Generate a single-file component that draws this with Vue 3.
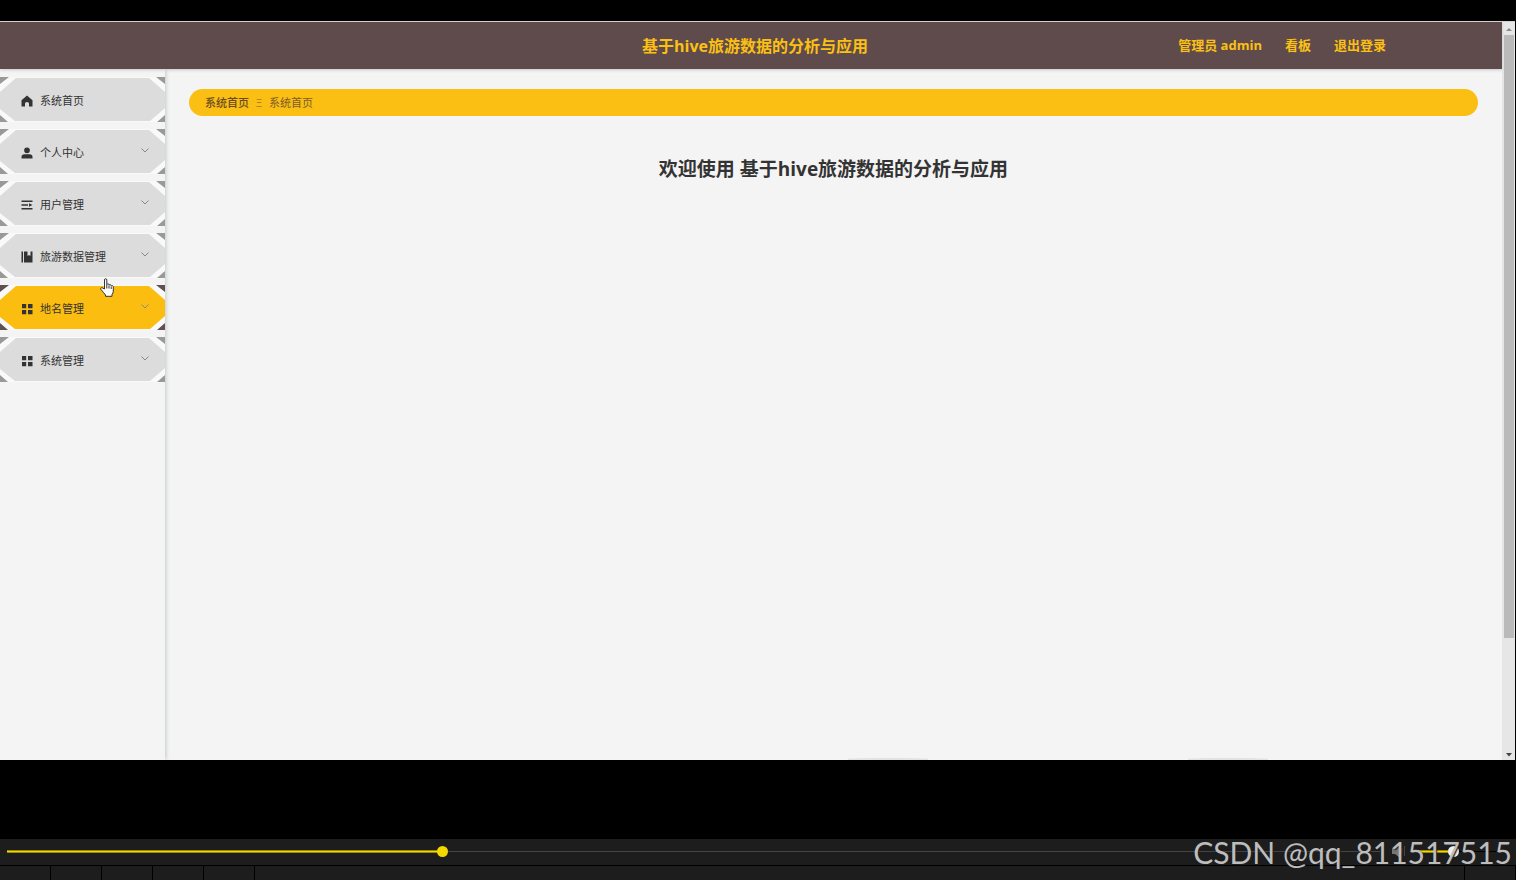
<script setup>
import { ref } from 'vue'

const siteName = '基于hive旅游数据的分析与应用'
const active = ref('place')
const progress = ref(316)
const volume = ref(48)

const menu = [
  { id: 'home', label: '系统首页', icon: 'home', sub: false },
  { id: 'me', label: '个人中心', icon: 'user', sub: true },
  { id: 'users', label: '用户管理', icon: 'lines', sub: true },
  { id: 'travel', label: '旅游数据管理', icon: 'book', sub: true },
  { id: 'place', label: '地名管理', icon: 'grid', sub: true },
  { id: 'system', label: '系统管理', icon: 'grid', sub: true }
]
</script>

<template>
  <div class="player">
    <section class="screen">
      <div class="page">
        <header class="topbar">
          <h1 class="brand">{{ siteName }}</h1>
          <nav class="links">
            <a href="#admin">管理员 admin</a>
            <a href="#board">看板</a>
            <a href="#logout">退出登录</a>
          </nav>
        </header>
        <div class="body">
          <nav class="sidebar">
            <button
              v-for="m in menu"
              :key="m.id"
              type="button"
              class="item"
              :class="{ active: active === m.id }"
            >
              <svg class="plate" viewBox="0 0 165 45" preserveAspectRatio="none" aria-hidden="true">
                <path class="band" d="M0 0H165V45H0Z" />
                <path class="fill" d="M16 1H149L165 15V31L150 44H15L0 32V15Z" />
                <path class="corner" d="M0 0H9L0 7ZM156 0H165V7ZM0 38L8 45H0ZM165 38V45H157Z" />
              </svg>
              <svg class="icon" viewBox="0 0 12 12" aria-hidden="true">
                <path v-if="m.icon === 'home'" d="M6 .5 11.5 5.2V11.5H8V8.500Q8 7 6 7T4 8.500V11.5H.5V5.2Z" />
                <path v-else-if="m.icon === 'user'" d="M6 .5A2.8 2.8 0 0 1 6 6.2 2.8 2.8 0 0 1 6 .5ZM.5 11.5V10Q.5 7.2 3.5 7.2H8.500Q11.500 7.200 11.500 10V11.500Z" />
                <path v-else-if="m.icon === 'lines'" d="M.5 1.500H11.500V3H.5ZM.5 5.200H7V6.700H.5ZM8 4.300 11.500 6 8 7.700ZM.5 9H11.500V10.500H.5Z" />
                <path v-else-if="m.icon === 'book'" d="M.5 .5H2V11.500H.5ZM3 .5H6.500V5L8 4 9.500 5V.5H11.500V11.500H3Z" />
                <path v-else d="M1 1H5.200V5.200H1ZM7 1H11.500V5.200H7ZM1 7H5.200V11.200H1ZM7 7H11.500V11.200H7Z" />
              </svg>
              <span class="label">{{ m.label }}</span>
              <svg v-if="m.sub" class="arrow" viewBox="0 0 8 5" aria-hidden="true">
                <path d="M.5 .5 4 4 7.500 .5" />
              </svg>
            </button>
          </nav>
          <main class="main">
            <div class="crumbs">
              <a href="#home" class="first">系统首页</a>
              <span class="sep">Ξ</span>
              <span>系统首页</span>
            </div>
            <h2 class="welcome">欢迎使用 {{ siteName }}</h2>
            <div class="peeks">
              <i class="peek"></i>
              <i class="peek"></i>
            </div>
          </main>
        </div>
      </div>
      <div class="scroll">
        <svg class="tip" viewBox="0 0 6 4" aria-hidden="true"><path class="dim" d="M0 4 3 1 6 4Z" /></svg>
        <div class="rail"><div class="thumb"></div></div>
        <svg class="tip" viewBox="0 0 6 4" aria-hidden="true"><path d="M0 0 3 3.500 6 0Z" /></svg>
      </div>
      <svg class="hand" viewBox="0 0 14 19" aria-hidden="true">
        <path d="M4.500 11V2Q4.500 .7 5.600 .7T6.800 2V6.500Q7.200 5.600 8.200 5.900T9 7.200Q9.500 6.300 10.400 6.700T11.200 8Q11.700 7.300 12.500 7.700T13.300 9V13Q13.300 15 12 16.500V18.300H5.500V17Q3.500 14.500 1 11.500 .3 10.300 1.200 9.800T3 10.300Z" />
        <path class="fingers" d="M6.800 6.500V10.500M9 7.500V10.500M11.200 8.500V11" />
      </svg>
    </section>

    <footer class="controls">
      <div class="timeline">
        <input v-model="progress" class="seek" type="range" min="0" max="1000" aria-label="Progress" :style="{ '--v': progress / 1000 }" />
        <svg class="speaker" viewBox="0 0 14 14" aria-hidden="true">
          <path d="M0 4H3L8 0V14L3 10H0Z" />
          <path class="wave" d="M10 4V10M12.500 2V12" />
        </svg>
        <input v-model="volume" class="volume" type="range" min="0" max="100" aria-label="Volume" :style="{ '--v': volume / 100 }" />
      </div>
      <div class="buttons">
        <i v-for="n in 5" :key="n" class="cell"></i>
        <i class="rest"></i>
        <i class="cell"></i>
      </div>
    </footer>
    <div class="mark">CSDN @qq_811517515</div>
  </div>
</template>

<style>
body {
  background: #000;
}
</style>

<style scoped>
* {
  box-sizing: border-box;
}
.player {
  position: relative;
  display: flex;
  flex-direction: column;
  min-height: 100vh;
  padding-top: 21px;
  overflow: hidden;
  background: #000;
  font-family: "Open Sans", "Noto Sans CJK SC", sans-serif;
}
.screen {
  position: relative;
  flex: 1;
  display: flex;
  margin: 0 1px 79px 0;
  border-top: 1px solid #d6cfcf;
  background: #f4f4f4;
  overflow: hidden;
}
.page {
  flex: 1;
  display: flex;
  flex-direction: column;
}
.topbar {
  position: relative;
  z-index: 1;
  display: grid;
  grid-template-columns: 1fr auto 1fr;
  align-items: center;
  height: 47px;
  padding-left: 8px;
  background: #5f4b4c;
  box-shadow: 0 1px 3px #c8c8c8;
  color: #fbc012;
}
.brand {
  grid-column: 2;
  margin: 0;
  font-size: 16px;
  line-height: 24px;
}
.links {
  display: flex;
  justify-content: flex-end;
  gap: 23px;
  padding: 0 116px 2px 0;
  font-size: 13px;
  font-weight: 700;
  line-height: 20px;
}
.links a {
  color: inherit;
  text-decoration: none;
  white-space: nowrap;
}
.body {
  flex: 1;
  display: flex;
}
.sidebar {
  width: 165px;
  display: flex;
  flex-direction: column;
  gap: 7px;
  padding-top: 8px;
  box-shadow: 1px 0 4px #c4c8c8;
}
.item {
  position: relative;
  display: flex;
  align-items: center;
  gap: 7px;
  width: 100%;
  height: 45px;
  padding: 2px 16px 0 21px;
  border: 0;
  background: none;
  color: #333;
  font-family: inherit;
  font-size: 11px;
  line-height: 16px;
  text-align: left;
}
.plate {
  position: absolute;
  inset: 0;
  width: 100%;
  height: 100%;
}
.band {
  fill: #f9f9f9;
}
.fill {
  fill: #dcdcdc;
}
.corner {
  fill: #999;
}
.active .fill {
  fill: #fbbd10;
}
.active .corner {
  fill: #5f5151;
}
.icon {
  position: relative;
  width: 12px;
  height: 12px;
  fill: #333;
}
.label {
  position: relative;
  flex: 1;
}
.arrow {
  position: relative;
  width: 8px;
  height: 5px;
  margin-bottom: 4px;
  fill: none;
  stroke: #888;
}
.main {
  flex: 1;
  display: flex;
  flex-direction: column;
  padding: 20px 24px 0;
}
.crumbs {
  display: flex;
  align-items: center;
  gap: 7px;
  height: 27px;
  padding: 0 16px;
  border-radius: 14px;
  background: #fbbf13;
  color: #7b5b28;
  font-size: 11px;
  line-height: 16px;
}
.first {
  color: #6a4a24;
  font-weight: 500;
  text-decoration: none;
}
.sep {
  color: #a87d20;
  font-size: 11px;
}
.welcome {
  margin: 39px 0 0;
  color: #333;
  font-size: 19px;
  line-height: 28px;
  text-align: center;
}
.peeks {
  display: flex;
  justify-content: flex-end;
  gap: 260px;
  margin-top: auto;
  padding-right: 210px;
}
.peek {
  width: 80px;
  height: 2px;
  border-radius: 50% 50% 0 0;
  background: #e2e2e2;
}
.scroll {
  display: flex;
  flex-direction: column;
  align-items: center;
  width: 13px;
  padding: 5px 0 3px;
  background: #e6e6e6;
}
.rail {
  flex: 1;
  width: 10px;
  margin: 4px 0 9px;
}
.thumb {
  height: 85%;
  background: #bababa;
}
.tip {
  width: 6px;
  height: 4px;
  fill: #444;
}
.dim {
  fill: #888;
}
.hand {
  position: absolute;
  left: 100px;
  top: 256px;
  width: 14px;
  height: 19px;
  fill: #fff;
  stroke: #333;
}
.fingers {
  fill: none;
}
.controls {
  background: #1d1d1d;
}
.timeline {
  display: flex;
  align-items: center;
  height: 27px;
  padding: 0 20px 2px 7px;
  border-bottom: 1px solid #000;
}
input[type="range"] {
  --fill: calc(6px + (100% - 12px) * var(--v));
  appearance: none;
  height: 11px;
  margin: 0;
  background: linear-gradient(90deg, #f4d900 var(--fill), var(--rest) var(--fill)) center / 100% 1px no-repeat,
    linear-gradient(90deg, #9a8a05 var(--fill), transparent var(--fill)) center / 100% 3px no-repeat;
}
input[type="range"]::-webkit-slider-thumb {
  appearance: none;
  width: 11px;
  height: 11px;
  border-radius: 50%;
  background: var(--knob);
}
.seek {
  --rest: #444;
  --knob: #f4d900;
  flex: 1;
}
.speaker {
  width: 14px;
  height: 14px;
  margin: 0 8px 0 12px;
  fill: #777;
}
.wave {
  fill: none;
  stroke: #444;
}
.volume {
  --rest: #000;
  --knob: #eee;
  width: 82px;
}
.buttons {
  display: flex;
  height: 14px;
}
.cell {
  width: 51px;
  border-right: 1px solid #000;
}
.rest {
  flex: 1;
  border-right: 1px solid #000;
}
.mark {
  position: absolute;
  right: 4px;
  bottom: 6px;
  color: #bdbdbd;
  font-family: Lato, sans-serif;
  font-size: 30px;
  line-height: 44px;
  pointer-events: none;
  text-shadow: 1px 1px 1px #222;
}
</style>
